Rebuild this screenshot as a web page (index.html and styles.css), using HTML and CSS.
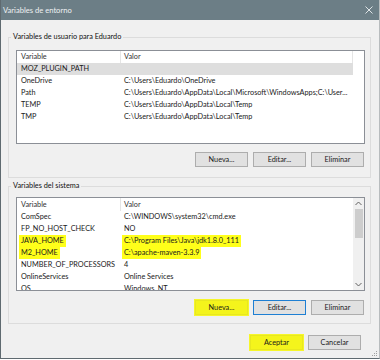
FILE: index.html
```html
<!DOCTYPE html>
<html lang="es">
<head>
<meta charset="utf-8">
<title>Variables de entorno</title>
<link rel="stylesheet" href="styles.css">
</head>
<body>
<div class="window">
  <div class="titlebar">
    <span class="title">Variables de entorno</span>
    <svg class="close" width="8" height="8" viewBox="0 0 8 8"><path d="M0.5 0.5L7.5 7.5M7.5 0.5L0.5 7.5" stroke="#dfe4e6" stroke-width="1" fill="none"/></svg>
  </div>
  <div class="content">
    <fieldset class="group g1">
      <legend>Variables de usuario para Eduardo</legend>
      <div class="list l1">
        <div class="table">
          <div class="hdr"><span class="c1">Variable</span><span class="c2">Valor</span></div>
          <div class="row sel"><span class="c1">MOZ_PLUGIN_PATH</span><span class="c2"></span></div>
          <div class="row"><span class="c1">OneDrive</span><span class="c2">C:\Users\Eduardo\OneDrive</span></div>
          <div class="row"><span class="c1">Path</span><span class="c2">C:\Users\Eduardo\AppData\Local\Microsoft\WindowsApps;C:\User...</span></div>
          <div class="row"><span class="c1">TEMP</span><span class="c2">C:\Users\Eduardo\AppData\Local\Temp</span></div>
          <div class="row"><span class="c1">TMP</span><span class="c2">C:\Users\Eduardo\AppData\Local\Temp</span></div>
        </div>
      </div>
      <div class="btns">
        <button class="btn">Nueva...</button>
        <button class="btn">Editar...</button>
        <button class="btn">Eliminar</button>
      </div>
    </fieldset>
    <fieldset class="group g2">
      <legend>Variables del sistema</legend>
      <div class="list l2">
        <div class="table">
          <div class="hdr"><span class="c1">Variable</span><span class="c2">Valor</span></div>
          <div class="row"><span class="c1">ComSpec</span><span class="c2">C:\WINDOWS\system32\cmd.exe</span></div>
          <div class="row"><span class="c1">FP_NO_HOST_CHECK</span><span class="c2">NO</span></div>
          <div class="row"><span class="c1"><span class="hl">JAVA_HOME</span></span><span class="c2"><span class="hl">C:\Program Files\Java\jdk1.8.0_111</span></span></div>
          <div class="row"><span class="c1"><span class="hl">M2_HOME</span></span><span class="c2"><span class="hl">C:\apache-maven-3.3.9</span></span></div>
          <div class="row"><span class="c1">NUMBER_OF_PROCESSORS</span><span class="c2">4</span></div>
          <div class="row"><span class="c1">OnlineServices</span><span class="c2">Online Services</span></div>
          <div class="row"><span class="c1">OS</span><span class="c2">Windows_NT</span></div>
        </div>
        <div class="scrollbar">
          <div class="arrow"><svg width="7" height="5" viewBox="0 0 7 5"><path d="M0.5 4L3.5 1L6.5 4" stroke="#606060" fill="none"/></svg></div>
          <div class="thumb"></div>
          <div class="track"></div>
          <div class="arrow"><svg width="7" height="5" viewBox="0 0 7 5"><path d="M0.5 1L3.5 4L6.5 1" stroke="#606060" fill="none"/></svg></div>
        </div>
      </div>
      <div class="btns">
        <button class="btn mark">Nueva...</button>
        <button class="btn focus">Editar...</button>
        <button class="btn">Eliminar</button>
      </div>
    </fieldset>
    <div class="footer">
      <button class="btn mark">Aceptar</button>
      <button class="btn">Cancelar</button>
    </div>
  </div>
  <svg class="grip" width="6" height="6" viewBox="0 0 6 6">
    <rect x="4" y="0" width="1" height="1" fill="#a0a0a0"/>
    <rect x="2" y="2" width="1" height="1" fill="#a0a0a0"/>
    <rect x="4" y="2" width="1" height="1" fill="#a0a0a0"/>
    <rect x="0" y="4" width="1" height="1" fill="#a0a0a0"/>
    <rect x="2" y="4" width="1" height="1" fill="#a0a0a0"/>
    <rect x="4" y="4" width="1" height="1" fill="#a0a0a0"/>
  </svg>
</div>
</body>
</html>
```
FILE: styles.css
```css
* { box-sizing: border-box; }
body {
  margin: 0;
  font-family: Lato, "Liberation Sans", sans-serif;
  font-size: 7.3px;
  color: #1a1a1a;
  background: #ffffff;
}
.window {
  position: relative;
  width: 380px;
  height: 359px;
  background: #f0f0f0;
  border-left: 1px solid #5f6a70;
  border-right: 1px solid #b8bcbe;
  border-bottom: 1px solid #5f6a70;
  display: flex;
  flex-direction: column;
}
.titlebar {
  height: 20px;
  flex: none;
  background: #6c7e86;
  display: flex;
  align-items: center;
  justify-content: space-between;
  padding: 0 6px 0 2px;
  color: #eef1f2;
  font-size: 7.6px;
}
.close { display: block; }
.content {
  padding: 12px 8px 0 7px;
  display: flex;
  flex-direction: column;
}
.group {
  margin: 0;
  min-width: 0;
  border: 1px solid #dcdcdc;
  display: flex;
  flex-direction: column;
}
.group legend {
  padding: 0 2px;
  margin-left: -5px;
  line-height: 10px;
  color: #111;
}
.g1 { padding: 8px 5px 10px 7px; }
.g2 { margin-top: 3px; padding: 6px 5px 8px 7px; }
.list {
  height: 94px;
  border: 1px solid #8b8f96;
  background: #fff;
  display: flex;
  overflow: hidden;
}
.table {
  flex: 1;
  min-width: 0;
  overflow: hidden;
}
.l1 .table { flex: none; width: 336px; }
.hdr, .row {
  display: flex;
  white-space: nowrap;
}
.hdr { height: 12px; line-height: 12px; color: #333; }
.l2 .hdr { height: 13px; line-height: 13px; }
.row { height: 12px; line-height: 12px; }
.c1 {
  flex: none;
  width: 104px;
  padding-left: 4px;
  overflow: hidden;
}
.c2 {
  flex: 1;
  min-width: 0;
  padding-left: 3px;
  overflow: hidden;
}
.hdr .c1 { border-right: 1px solid #e5e5e5; }
.l1 .hdr .c2 { border-right: 1px solid #e5e5e5; }
.row.sel { background: #dedede; }
.hl {
  display: inline-block;
  background: #ffff1a;
  line-height: 12px;
  height: 12px;
  margin-left: -2px;
  padding: 0 2px;
}
.scrollbar {
  width: 11px;
  flex: none;
  background: #f0f0f0;
  display: flex;
  flex-direction: column;
  align-items: center;
}
.arrow {
  height: 11px;
  width: 11px;
  display: flex;
  align-items: center;
  justify-content: center;
}
.thumb {
  width: 8px;
  height: 29px;
  background: #cdcdcd;
}
.track { flex: 1; }
.btns {
  margin-top: 8px;
  margin-right: 1px;
  display: flex;
  justify-content: flex-end;
  gap: 5px;
}
.g2 .btns { margin-top: 9px; }
.btn {
  width: 53px;
  height: 15px;
  margin: 0;
  padding: 0;
  font: inherit;
  color: #1a1a1a;
  background: #e1e1e1;
  border: 1px solid #adadad;
}
.btn.focus { border-color: #1e7fd3; }
.btn.mark {
  background: #f4f41c;
  border-color: #e8e820;
  box-shadow: 0 0 0 1px #f6f62a;
}
.footer {
  margin-top: 11px;
  margin-right: 10px;
  display: flex;
  justify-content: flex-end;
  gap: 5px;
}
.grip {
  position: absolute;
  right: 1px;
  bottom: 1px;
}
```
